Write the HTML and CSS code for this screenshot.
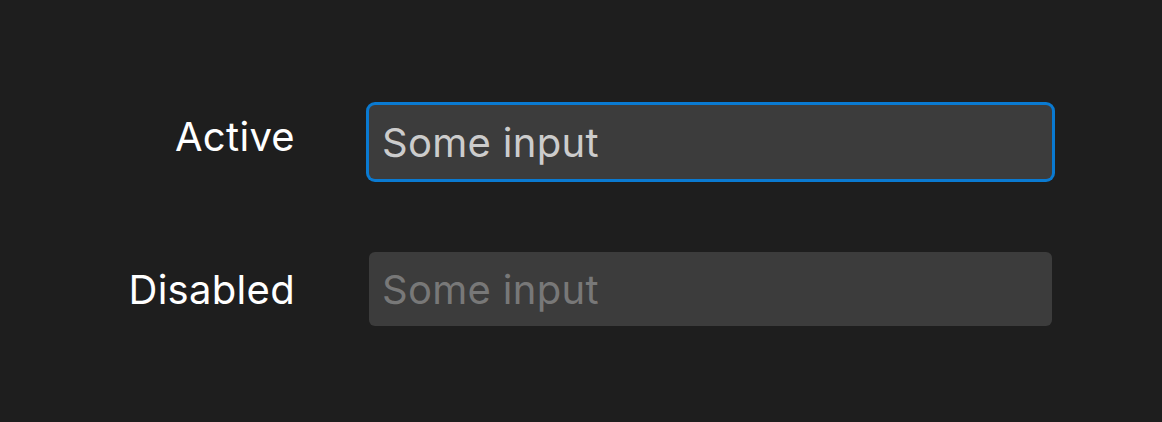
FILE: index.html
```html
<html>
    <head>
        <title>Inputs</title>
        <link rel="stylesheet" href="styles.css">
    </head>
    <body>
        <div class="form">
            <label class="label label-active" for="active-input">Active</label>
            <input class="text-input is-active" id="active-input" type="text" value="Some input">
            <label class="label" for="disabled-input">Disabled</label>
            <input class="text-input" id="disabled-input" type="text" value="Some input" disabled>
        </div>
    </body>
</html>
```

FILE: styles.css
```css
* {
    margin: 0;
    box-sizing: border-box;
}

body {
    padding: 0;
    background-color: #1e1e1e;
    font-family: 'Inter', 'Noto Sans', sans-serif;
}

.form {
    display: grid;
    grid-template-columns: 295px 683px;
    column-gap: 74px;
    row-gap: 73px;
    align-items: center;
    padding-top: 105px;
}

.label {
    color: #ffffff;
    font-size: 40px;
    letter-spacing: 0.3px;
    text-align: right;
}

.label-active {
    padding-bottom: 11px;
}

.text-input {
    height: 74px;
    padding: 0 13px;
    border: none;
    border-radius: 6px;
    outline: none;
    background-color: #3c3c3c;
    color: #cccccc;
    font-family: 'Inter', 'Noto Sans', sans-serif;
    font-size: 40px;
    letter-spacing: 0.3px;
}

.text-input.is-active {
    box-shadow: 0 0 0 3px #0a7ad1;
}

.text-input:disabled {
    color: #787878;
    -webkit-text-fill-color: #787878;
}
```
